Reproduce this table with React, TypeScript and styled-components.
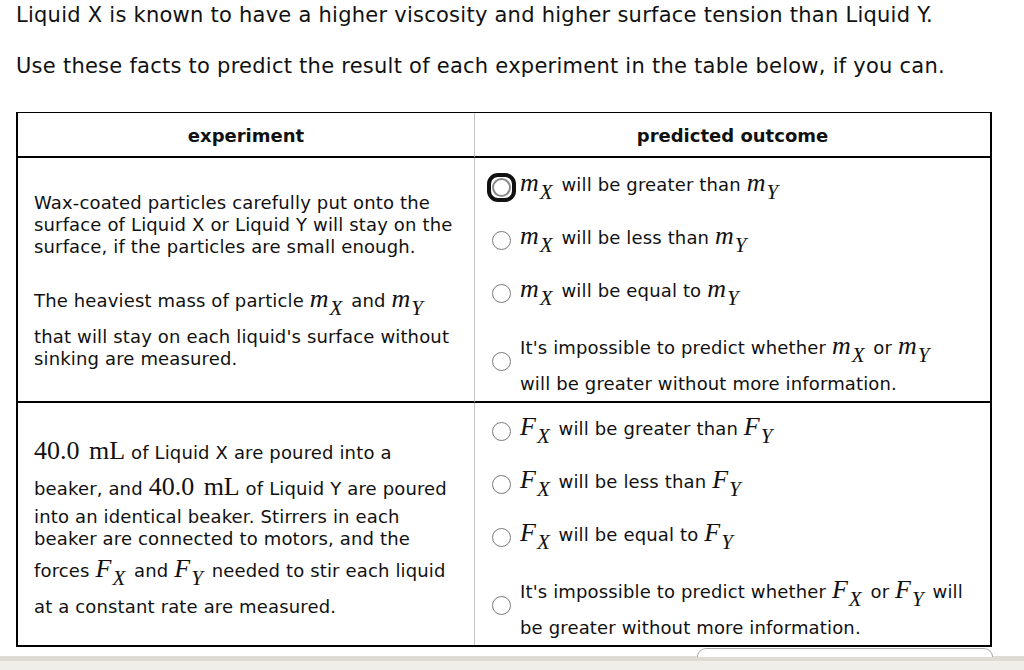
import React from "react";
import styled, { createGlobalStyle, css } from "styled-components";

const GlobalStyle = createGlobalStyle`
  html, body {
    margin: 0;
    padding: 0;
    background: #fff;
  }
  body {
    font-family: "DejaVu Sans", Verdana, sans-serif;
    color: #111;
    overflow: hidden;
  }
`;

const Page = styled.div`
  width: 1024px;
  height: 670px;
  position: relative;
  overflow: hidden;
`;

const Intro = styled.p`
  margin: 0;
  padding-left: 16px;
  font-size: 21px;
  line-height: 28px;
  letter-spacing: 0.25px;
  color: #111;
  & + & {
    margin-top: 23px;
  }
  &:first-child {
    padding-top: 1px;
  }
`;

const Grid = styled.div`
  margin: 32px 0 0 16px;
  width: 976px;
  box-sizing: border-box;
  border: 2px solid #000;
  border-top-width: 1px;
  display: grid;
  grid-template-columns: 457px 1fr;
  font-size: 18px;
  letter-spacing: 0.15px;
  line-height: 22px;
`;

const HeadCell = styled.div<{ $last?: boolean }>`
  height: 45px;
  box-sizing: border-box;
  border-bottom: 2px solid #000;
  border-right: ${(p) => (p.$last ? "none" : "1px solid #c4c4c4")};
  display: flex;
  align-items: center;
  justify-content: center;
  font-weight: bold;
  letter-spacing: 0;
  padding-top: 3px;
`;

const ExperimentCell = styled.div<{ $bottom?: boolean; $shift?: number }>`
  box-sizing: border-box;
  border-right: 1px solid #c4c4c4;
  border-bottom: ${(p) => (p.$bottom ? "2px solid #000" : "none")};
  padding: ${(p) => p.$shift ?? 1}px 14px 0 16px;
  display: flex;
  flex-direction: column;
  justify-content: center;
`;

const Para = styled.p`
  margin: 0;
  & + & {
    margin-top: 22px;
  }
`;

const OutcomeCell = styled.div<{ $bottom?: boolean; $top: number; $height: number }>`
  box-sizing: border-box;
  height: ${(p) => p.$height}px;
  border-bottom: ${(p) => (p.$bottom ? "2px solid #000" : "none")};
  padding: ${(p) => p.$top}px 8px 0 17px;
  display: flex;
  flex-direction: column;
  gap: 7px;
`;

const Option = styled.label<{ $tall?: boolean }>`
  display: flex;
  align-items: center;
  gap: 9px;
  ${(p) => p.$tall && css`margin-top: 4px;`}
`;

const OptionText = styled.span`
  white-space: nowrap;
`;

const Radio = styled.span<{ $focused?: boolean }>`
  position: relative;
  flex: none;
  width: 19px;
  height: 19px;
  box-sizing: border-box;
  border: 1.5px solid #7a7a7a;
  border-radius: 50%;
  background: #fff;
  ${(p) =>
    p.$focused &&
    css`
      border: 2px solid #8a8a8a;
      &::after {
        content: "";
        position: absolute;
        inset: -7px;
        border: 4px solid #111;
        border-radius: 11px;
      }
    `}
`;

/* inline math: the group itself stretches the line box like the typeset original */
const MathGroup = styled.span<{ $above: number; $below: number }>`
  display: inline-block;
  padding-top: ${(p) => p.$above}px;
  padding-bottom: ${(p) => p.$below}px;
  line-height: 22px;
  letter-spacing: 0;
  white-space: nowrap;
`;

const Var = styled.span`
  font-family: "Liberation Serif", "Times New Roman", serif;
  font-style: italic;
  font-size: 26px;
  line-height: 0;
`;

const Sub = styled.span`
  font-family: "Liberation Serif", "Times New Roman", serif;
  font-style: italic;
  font-size: 21px;
  line-height: 0;
  position: relative;
  top: 8px;
  margin-left: 1px;
  margin-right: 3px;
`;

const Quantity = styled.span`
  font-family: "Liberation Serif", "Times New Roman", serif;
  font-size: 26px;
  line-height: 0;
  word-spacing: 3px;
`;

const Footer = styled.div`
  position: absolute;
  left: 0;
  right: 0;
  bottom: 0;
  height: 14px;
  background: linear-gradient(#dddbd3 0 5px, #efeee9 5px);
`;

const Tab = styled.div`
  position: absolute;
  left: 697px;
  width: 294px;
  top: -8px;
  height: 8px;
  border: 1px solid #a9a9a9;
  border-bottom: none;
  border-radius: 10px 10px 0 0;
  background: #fff;
`;

const Sym = ({ v, s }: { v: string; s: string }) => (
  <MathGroup $above={10} $below={14}>
    <Var>{v}</Var>
    <Sub>{s}</Sub>
  </MathGroup>
);

const Volume = () => (
  <MathGroup $above={8} $below={6}>
    <Quantity>40.0 mL</Quantity>
  </MathGroup>
);

const comparisons = ["will be greater than", "will be less than", "will be equal to"];

const OutcomeList = ({ v, focusFirst, tail }: { v: string; focusFirst?: boolean; tail: React.ReactNode }) => (
  <>
    {comparisons.map((text, i) => (
      <Option key={text}>
        <Radio $focused={focusFirst && i === 0} />
        <OptionText>
          <Sym v={v} s="X" /> {text} <Sym v={v} s="Y" />
        </OptionText>
      </Option>
    ))}
    <Option $tall>
      <Radio />
      <OptionText>{tail}</OptionText>
    </Option>
  </>
);

export default function App() {
  return (
    <Page>
      <GlobalStyle />
      <Intro>Liquid X is known to have a higher viscosity and higher surface tension than Liquid Y.</Intro>
      <Intro>Use these facts to predict the result of each experiment in the table below, if you can.</Intro>
      <Grid>
        <HeadCell>experiment</HeadCell>
        <HeadCell $last>predicted outcome</HeadCell>

        <ExperimentCell $bottom $shift={2}>
          <Para>
            Wax-coated particles carefully put onto the surface of Liquid X or Liquid Y will stay on the
            surface, if the particles are small enough.
          </Para>
          <Para>
            The heaviest mass of particle <Sym v="m" s="X" /> and <Sym v="m" s="Y" /> that will stay on each
            liquid's surface without sinking are measured.
          </Para>
        </ExperimentCell>
        <OutcomeCell $bottom $top={6} $height={245}>
          <OutcomeList
            v="m"
            focusFirst
            tail={
              <>
                It's impossible to predict whether <Sym v="m" s="X" /> or <Sym v="m" s="Y" />
                <br />
                will be greater without more information.
              </>
            }
          />
        </OutcomeCell>

        <ExperimentCell $shift={3}>
          <Para>
            <Volume /> of Liquid X are poured into a beaker, and <Volume /> of Liquid Y are poured into an
            identical beaker. Stirrers in each beaker are connected to motors, and the forces{" "}
            <Sym v="F" s="X" /> and <Sym v="F" s="Y" /> needed to stir each liquid at a constant rate are measured.
          </Para>
        </ExperimentCell>
        <OutcomeCell $top={5} $height={242}>
          <OutcomeList
            v="F"
            tail={
              <>
                It's impossible to predict whether <Sym v="F" s="X" /> or <Sym v="F" s="Y" /> will
                <br />
                be greater without more information.
              </>
            }
          />
        </OutcomeCell>
      </Grid>
      <Footer>
        <Tab />
      </Footer>
    </Page>
  );
}
